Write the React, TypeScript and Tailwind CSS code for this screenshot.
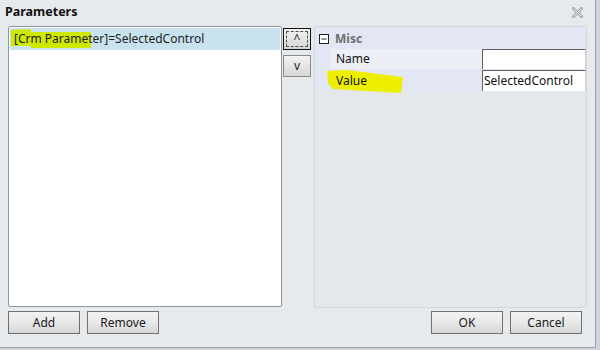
const font = { fontFamily: '"Noto Sans", "Open Sans", sans-serif' };

function Btn({ label, className = "" }: { label: string; className?: string }) {
  return (
    <button
      className={`h-[23px] w-[72px] border border-[#707070] bg-gradient-to-b from-[#f3f3f3] via-[#e8e8e8] to-[#d6d6d6] text-[12px] text-[#1a1a1a] leading-none ${className}`}
    >
      {label}
    </button>
  );
}

function CloseIcon() {
  return (
    <svg width="11" height="11" viewBox="0 0 11 11">
      <path d="M1.5 1.5 L9.5 9.5 M9.5 1.5 L1.5 9.5" stroke="#a3a7ac" strokeWidth="3" strokeLinecap="square" />
      <path d="M1.5 1.5 L9.5 9.5 M9.5 1.5 L1.5 9.5" stroke="#eef0f2" strokeWidth="1" />
    </svg>
  );
}

function ArrowBtn({ label, focused }: { label: string; focused?: boolean }) {
  return (
    <button
      className={`relative h-[22px] w-[28px] bg-gradient-to-b from-[#f3f3f3] to-[#d6d6d6] text-[12px] leading-none text-[#222] ${
        focused ? "border border-[#111]" : "border border-[#8a8a8a]"
      }`}
    >
      {focused && <span className="absolute inset-[2px] border border-dashed border-[#555]" />}
      <span className="relative">{label}</span>
    </button>
  );
}

export default function App() {
  return (
    <div className="w-[600px] h-[350px] bg-[#cdd3d9] overflow-hidden" style={font}>
      <div className="w-[596px] h-[348px] bg-[#e7eaed] border-r border-b border-[#9aa3ab] flex flex-col">
        <div className="h-[25px] flex items-center justify-between pl-[5px] pr-[12px]">
          <span className="text-[12.5px] font-bold text-[#111]">Parameters</span>
          <CloseIcon />
        </div>

        <div className="flex pl-[8px] pt-[1px]">
          <div className="w-[274px] h-[281px] border border-[#8c969e] rounded-[2px] bg-white p-[1px]">
            <div className="relative h-[22px] bg-[#c9e3ee] flex items-center pl-[4px] text-[12px] text-[#222]">
              <svg className="absolute left-[1px] top-[1px]" width="82" height="20">
                <polygon points="0,1 20,0 20,3 80,3 80,19 20,19 20,17 0,17" fill="#cfe800" />
              </svg>
              <span className="relative">[Crm Parameter]=SelectedControl</span>
            </div>
          </div>

          <div className="flex flex-col gap-[5px] pt-[2px] ml-[1px] mr-[3px]">
            <ArrowBtn label="^" focused />
            <ArrowBtn label="v" />
          </div>

          <div className="w-[273px] h-[282px] border border-[#d2d7dc] rounded-[2px] bg-[#e5e8eb]">
            <div className="bg-[#e3e6f4] pt-[1px]">
              <div className="h-[21px] flex items-center pl-[4px] gap-[6px]">
                <svg width="10" height="10" viewBox="0 0 10 10">
                  <rect x="0.5" y="0.5" width="9" height="9" fill="#fff" stroke="#222" />
                  <path d="M2.5 5 H7.5" stroke="#222" />
                </svg>
                <span className="text-[12px] font-bold text-[#6e6e6e]">Misc</span>
              </div>
              <div className="flex flex-col gap-[1px]">
                <div className="flex h-[20px] pl-[16px]">
                  <div className="flex-1 bg-[#edeff7] flex items-center pl-[5px] text-[12px] text-[#111]">Name</div>
                  <div className="w-[104px] bg-white border-t border-l border-[#5f5f5f] border-r border-r-[#d0d0d0]" />
                </div>
                <div className="flex h-[21px] pl-[16px]">
                  <div className="relative flex-1 flex items-center pl-[5px] text-[12px] text-[#111]">
                    <svg className="absolute left-[-4px] top-[-1px]" width="80" height="24">
                      <polygon points="0,2 20,1 76,8 74,24 6,20 1,14" fill="#ecf000" />
                    </svg>
                    <span className="relative">Value</span>
                  </div>
                  <div className="w-[104px] bg-white border-t border-l border-[#5f5f5f] border-r border-r-[#d0d0d0] flex items-center pl-[1px] text-[12px] text-[#111]">
                    SelectedControl
                  </div>
                </div>
              </div>
            </div>
          </div>
        </div>

        <div className="flex items-center pl-[8px] pt-[3px]">
          <Btn label="Add" />
          <Btn label="Remove" className="ml-[7px]" />
          <Btn label="OK" className="ml-auto" />
          <Btn label="Cancel" className="ml-[7px] mr-[13px]" />
        </div>
      </div>
    </div>
  );
}
